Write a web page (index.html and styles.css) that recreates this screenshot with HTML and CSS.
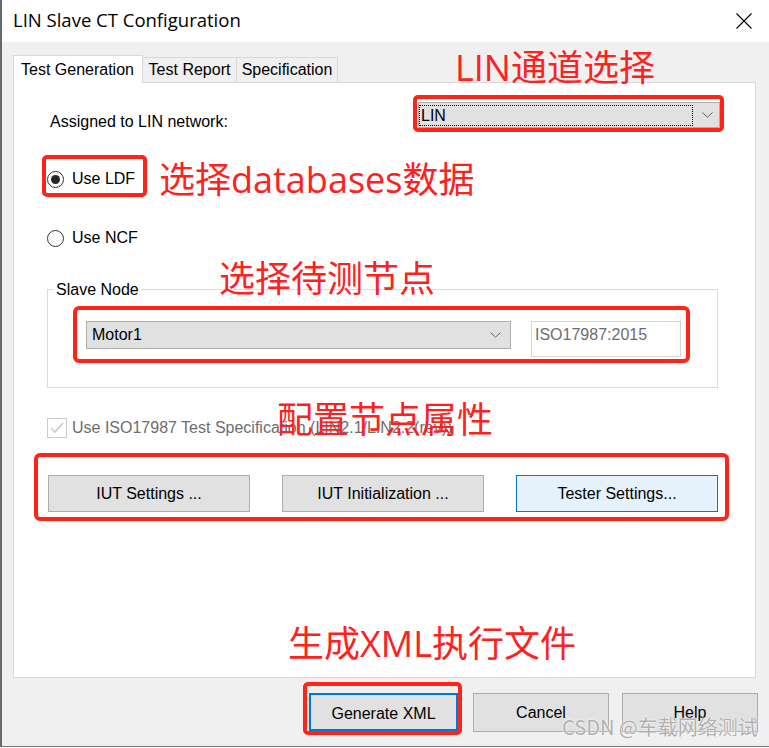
FILE: index.html
```html
<!DOCTYPE html>
<html>
<head>
<meta charset="utf-8">
<title>LIN Slave CT Configuration</title>
<link rel="stylesheet" href="styles.css">
</head>
<body>
<div class="window">
  <div class="titlebar">
    <span class="title">LIN Slave CT Configuration</span>
    <svg class="close" width="16" height="16" viewBox="0 0 16 16"><path d="M0.5 0.5L15.5 15.5M15.5 0.5L0.5 15.5" stroke="#000" stroke-width="1.1" fill="none"/></svg>
  </div>
  <div class="client">
    <div class="tabs">
      <div class="tab active">Test Generation</div>
      <div class="tab report">Test Report</div>
      <div class="tab spec">Specification</div>
    </div>
    <div class="panel">
      <div class="row-net">
        <span class="label-net">Assigned to LIN network:</span>
        <div class="mark mark-net">
          <div class="combo combo-net">
            <span class="focus">LIN</span>
            <svg class="chev" width="11" height="6" viewBox="0 0 11 6"><path d="M0.5 0.5L5.5 5.2L10.5 0.5" stroke="#606060" fill="none"/></svg>
          </div>
        </div>
      </div>
      <div class="mark mark-ldf">
        <div class="radio"><span class="circle"><span class="dot"></span></span>Use LDF</div>
      </div>
      <div class="radio radio-ncf"><span class="circle"></span>Use NCF</div>
      <fieldset class="group">
        <legend>Slave Node</legend>
        <div class="mark mark-node">
          <div class="combo combo-node">
            <span>Motor1</span>
            <svg class="chev" width="11" height="6" viewBox="0 0 11 6"><path d="M0.5 0.5L5.5 5.2L10.5 0.5" stroke="#606060" fill="none"/></svg>
          </div>
          <div class="textbox">ISO17987:2015</div>
        </div>
      </fieldset>
      <div class="check">
        <span class="cbox"><svg width="18" height="18" viewBox="0 0 18 18"><path d="M3 9L7 13L15 4" stroke="#c9c9c9" stroke-width="1.6" fill="none"/></svg></span>
        <span>Use ISO17987 Test Specification (LIN2.1/LIN2.2(rev))</span>
      </div>
      <div class="mark mark-btns">
        <div class="btn">IUT Settings ...</div>
        <div class="btn">IUT Initialization ...</div>
        <div class="btn btn-hot">Tester Settings...</div>
      </div>

      <div class="note n-lin">LIN通道选择</div>
      <div class="note n-ldf">选择databases数据</div>
      <div class="note n-node">选择待测节点</div>
      <div class="note n-attr">配置节点属性</div>
      <div class="note n-xml">生成XML执行文件</div>
    </div>
    <div class="footer">
      <div class="mark mark-gen">
        <div class="btn btn-gen">Generate XML</div>
      </div>
      <div class="btn btn-foot btn-cancel">Cancel</div>
      <div class="btn btn-foot btn-help">Help</div>
    </div>
  </div>
  <div class="watermark">CSDN @车载网络测试</div>
</div>
</body>
</html>
```
FILE: styles.css
```css
* { box-sizing: border-box; }
html, body { margin: 0; padding: 0; background: #fff; }
body {
  font-family: "Liberation Sans", Arial, sans-serif;
  font-size: 16px;
  color: #000;
}
.window {
  position: relative;
  width: 769px;
  height: 747px;
  border-left: 2px solid #666a70;
  border-bottom: 1px solid #747474;
  display: flex;
  flex-direction: column;
  overflow: hidden;
}
.titlebar {
  height: 42px;
  background: #fff;
  display: flex;
  justify-content: space-between;
  align-items: flex-start;
  padding: 7px 17px 0 11px;
}
.title {
  font-family: "Open Sans", "Noto Sans", sans-serif;
  font-size: 18.5px;
  line-height: 25px;
}
.close { margin-top: 6px; }
.client {
  flex: 1;
  background: #f0f0f0;
  padding: 13px 0 0 11px;
  display: flex;
  flex-direction: column;
}
.tabs {
  display: flex;
  align-items: flex-end;
  height: 27px;
}
.tab {
  height: 25px;
  border: 1px solid #d9d9d9;
  border-bottom: 0;
  display: flex;
  align-items: center;
  justify-content: center;
  line-height: 18px;
  white-space: nowrap;
}
.tab.active {
  height: 28px;
  margin-bottom: -1px;
  width: 130px;
  background: #fff;
  justify-content: flex-start;
  padding-left: 7px;
  position: relative;
  z-index: 1;
}
.tab.report { width: 94px; border-left: 0; }
.tab.spec { width: 101px; border-left: 0; }
.panel {
  position: relative;
  width: 743px;
  height: 596px;
  background: #fff;
  border: 1px solid #d9d9d9;
}
.mark {
  border: 4px solid #ff2418;
  border-radius: 5px;
}
.row-net {
  display: flex;
  margin-top: 12px;
  height: 37px;
}
.label-net {
  margin: 18px 0 0 36px;
  line-height: 18px;
}
.mark-net {
  margin-left: auto;
  margin-right: 31px;
  width: 311px;
  height: 37px;
  padding: 3px 0 0 1px;
}
.combo {
  background: #e1e1e1;
  border: 1px solid #adadad;
  display: flex;
  align-items: center;
}
.combo-net {
  width: 302px;
  height: 26px;
}
.focus {
  width: 274px;
  height: 21px;
  border: 1px dotted #000;
  padding-left: 1px;
  line-height: 19px;
}
.combo-net .chev { margin-left: 9px; }
.mark-ldf {
  margin: 23px 0 0 28px;
  width: 105px;
  height: 42px;
  padding: 11px 0 0 1px;
}
.radio {
  display: flex;
  align-items: center;
  gap: 8px;
  line-height: 18px;
}
.circle {
  width: 17px;
  height: 17px;
  border: 1px solid #333;
  border-radius: 50%;
  background: #fff;
  display: flex;
  align-items: center;
  justify-content: center;
}
.dot {
  width: 9px;
  height: 9px;
  border-radius: 50%;
  background: #262626;
}
.radio-ncf { margin: 32px 0 0 33px; }
.group {
  margin: 34px 0 0 33px;
  width: 671px;
  padding: 0;
  border: 1px solid #dcdcdc;
  min-width: 0;
}
.group legend {
  margin-left: 6px;
  padding: 0 2px;
  line-height: 17px;
}
.mark-node {
  margin: 8px 0 24px 25px;
  width: 617px;
  height: 57px;
  padding: 11px 0 0 9px;
  display: flex;
  align-items: flex-start;
  gap: 20px;
  border-radius: 6px;
}
.combo-node {
  width: 425px;
  height: 28px;
  padding: 0 9px 0 5px;
  justify-content: space-between;
}
.textbox {
  width: 150px;
  height: 36px;
  border: 1px solid #d5d5d5;
  background: #fff;
  color: #6d6d6d;
  padding: 4px 0 0 3px;
  line-height: 18px;
}
.check {
  display: flex;
  align-items: center;
  gap: 5px;
  margin: 30px 0 0 33px;
  color: #6d6d6d;
  line-height: 18px;
}
.cbox {
  width: 20px;
  height: 20px;
  border: 1px solid #cccccc;
  background: #fff;
  display: flex;
  align-items: center;
  justify-content: center;
}
.mark-btns {
  margin: 15px 0 0 20px;
  width: 695px;
  height: 68px;
  padding: 18px 0 0 10px;
  display: flex;
  gap: 32px;
  border-radius: 6px;
}
.btn {
  width: 202px;
  height: 37px;
  background: #e1e1e1;
  border: 1px solid #adadad;
  display: flex;
  align-items: center;
  justify-content: center;
  white-space: nowrap;
}
.btn-hot {
  background: #e5f1fb;
  border-color: #0078d7;
}
.footer {
  display: flex;
  justify-content: flex-end;
  align-items: flex-start;
  padding-right: 11px;
}
.mark-gen {
  margin-top: 4px;
  width: 159px;
  height: 53px;
  padding: 7px 0 0 2px;
}
.btn-gen {
  width: 149px;
  height: 38px;
  border: 2px solid #0078d7;
  padding-top: 3px;
}
.btn-foot {
  width: 136px;
  height: 39px;
  margin-top: 15px;
}
.btn-cancel { margin-left: 11px; }
.btn-help { margin-left: 13px; }
.note {
  position: absolute;
  color: #ff2020;
  font-family: "Open Sans", "Noto Sans CJK SC", sans-serif;
  font-size: 36px;
  line-height: 40px;
  white-space: nowrap;
}
.n-lin { left: 441px; top: -35px; }
.n-ldf { left: 145px; top: 77px; }
.n-node { left: 205px; top: 176px; }
.n-attr { left: 263px; top: 317px; }
.n-xml { left: 274px; top: 541px; }
.watermark {
  position: absolute;
  left: 560px;
  top: 715px;
  font-family: "Noto Sans CJK SC", sans-serif;
  font-size: 20px;
  line-height: 24px;
  color: #b0b0b0;
  text-shadow: 0 0 2px #fff, 0 0 1px #fff;
  white-space: nowrap;
}
```
